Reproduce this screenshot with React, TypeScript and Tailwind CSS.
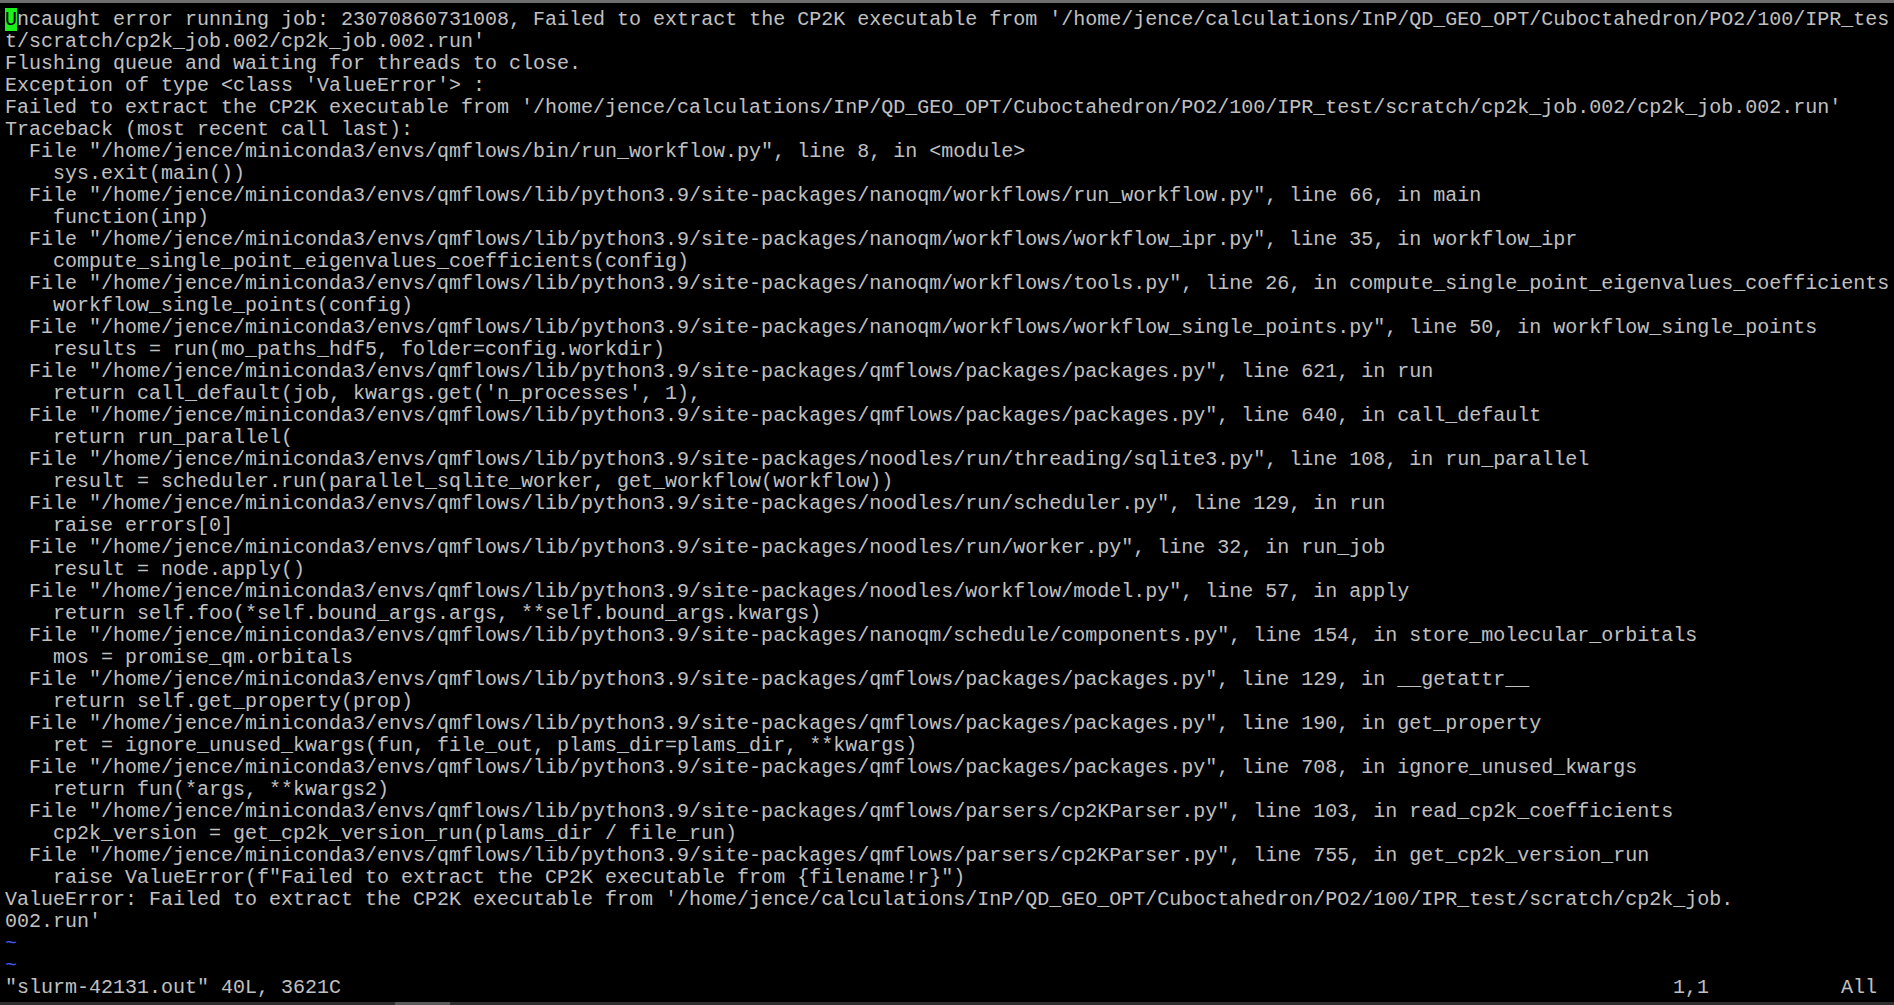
const SP = "/home/jence/miniconda3/envs/qmflows/lib/python3.9/site-packages";
const CALC = "/home/jence/calculations/InP/QD_GEO_OPT/Cuboctahedron/PO2/100/IPR_test/scratch/cp2k_job.002/cp2k_job.002.run";

const frames: [string, string][] = [
  [`File "/home/jence/miniconda3/envs/qmflows/bin/run_workflow.py", line 8, in <module>`, "sys.exit(main())"],
  [`File "${SP}/nanoqm/workflows/run_workflow.py", line 66, in main`, "function(inp)"],
  [`File "${SP}/nanoqm/workflows/workflow_ipr.py", line 35, in workflow_ipr`, "compute_single_point_eigenvalues_coefficients(config)"],
  [`File "${SP}/nanoqm/workflows/tools.py", line 26, in compute_single_point_eigenvalues_coefficients`, "workflow_single_points(config)"],
  [`File "${SP}/nanoqm/workflows/workflow_single_points.py", line 50, in workflow_single_points`, "results = run(mo_paths_hdf5, folder=config.workdir)"],
  [`File "${SP}/qmflows/packages/packages.py", line 621, in run`, "return call_default(job, kwargs.get('n_processes', 1),"],
  [`File "${SP}/qmflows/packages/packages.py", line 640, in call_default`, "return run_parallel("],
  [`File "${SP}/noodles/run/threading/sqlite3.py", line 108, in run_parallel`, "result = scheduler.run(parallel_sqlite_worker, get_workflow(workflow))"],
  [`File "${SP}/noodles/run/scheduler.py", line 129, in run`, "raise errors[0]"],
  [`File "${SP}/noodles/run/worker.py", line 32, in run_job`, "result = node.apply()"],
  [`File "${SP}/noodles/workflow/model.py", line 57, in apply`, "return self.foo(*self.bound_args.args, **self.bound_args.kwargs)"],
  [`File "${SP}/nanoqm/schedule/components.py", line 154, in store_molecular_orbitals`, "mos = promise_qm.orbitals"],
  [`File "${SP}/qmflows/packages/packages.py", line 129, in __getattr__`, "return self.get_property(prop)"],
  [`File "${SP}/qmflows/packages/packages.py", line 190, in get_property`, "ret = ignore_unused_kwargs(fun, file_out, plams_dir=plams_dir, **kwargs)"],
  [`File "${SP}/qmflows/packages/packages.py", line 708, in ignore_unused_kwargs`, "return fun(*args, **kwargs2)"],
  [`File "${SP}/qmflows/parsers/cp2KParser.py", line 103, in read_cp2k_coefficients`, "cp2k_version = get_cp2k_version_run(plams_dir / file_run)"],
  [`File "${SP}/qmflows/parsers/cp2KParser.py", line 755, in get_cp2k_version_run`, `raise ValueError(f"Failed to extract the CP2K executable from {filename!r}")`],
];

const lines: string[] = [
  "t/scratch/cp2k_job.002/cp2k_job.002.run'",
  "Flushing queue and waiting for threads to close.",
  "Exception of type <class 'ValueError'> :",
  `Failed to extract the CP2K executable from '${CALC}'`,
  "Traceback (most recent call last):",
  ...frames.flatMap(([f, code]) => [`  ${f}`, `    ${code}`]),
  "ValueError: Failed to extract the CP2K executable from '/home/jence/calculations/InP/QD_GEO_OPT/Cuboctahedron/PO2/100/IPR_test/scratch/cp2k_job.",
  "002.run'",
];

const status = `"slurm-42131.out" 40L, 3621C`;

export default function App() {
  return (
    <div className="flex h-screen w-full flex-col overflow-hidden bg-black font-['Liberation_Mono',monospace] text-[20px] leading-[22px] text-[#c0c0c0]">
      <div className="h-[3px] shrink-0 bg-[#6e6e6e]" />
      <div className="flex-1 whitespace-pre pl-[5px] pt-[6px]">
        <div>
          <span className="bg-[#1cf01c] text-black">U</span>
          {"ncaught error running job: 23070860731008, Failed to extract the CP2K executable from '/home/jence/calculations/InP/QD_GEO_OPT/Cuboctahedron/PO2/100/IPR_tes"}
        </div>
        {lines.map((l, i) => (
          <div key={i}>{l}</div>
        ))}
        <div className="text-[#4656e8]">~</div>
        <div className="text-[#4656e8]">~</div>
        <div className="flex">
          <span className="w-[1668px]">{status}</span>
          <span className="w-[168px]">1,1</span>
          <span>All</span>
        </div>
      </div>
      <div className="flex h-[3px] shrink-0 bg-[#2e2e2e]">
        <div className="w-[395px]" />
        <div className="w-[55px] bg-[#5a5a5a]" />
      </div>
    </div>
  );
}
